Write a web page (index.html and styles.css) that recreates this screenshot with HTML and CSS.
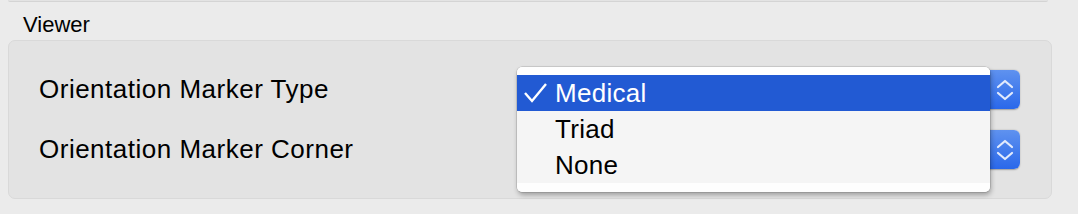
FILE: index.html
```html
<!DOCTYPE html>
<html lang="en">
<head>
    <meta charset="UTF-8">
    <title>Viewer Preferences</title>
    <link rel="stylesheet" href="styles.css">
</head>
<body>
    <div class="prev-box"></div>

    <div class="section-title">Viewer</div>

    <div class="group">
        <div class="row">
            <div class="label">Orientation Marker Type</div>
            <div class="popup">
                <span class="popup-text">Medical</span>
                <span class="stepper">
                    <svg width="18" height="22" viewBox="0 0 18 22">
                        <polyline points="2,8 9,2 16,8" />
                        <polyline points="2,14 9,20 16,14" />
                    </svg>
                </span>
            </div>
        </div>
        <div class="row">
            <div class="label">Orientation Marker Corner</div>
            <div class="popup">
                <span class="popup-text">Upper Right</span>
                <span class="stepper">
                    <svg width="18" height="22" viewBox="0 0 18 22">
                        <polyline points="2,8 9,2 16,8" />
                        <polyline points="2,14 9,20 16,14" />
                    </svg>
                </span>
            </div>
        </div>

        <!-- open popup menu for the first row -->
        <div class="menu">
            <div class="menu-item selected">
                <svg class="check" width="24" height="20" viewBox="0 0 24 20">
                    <polyline points="1,10 8,18 22,1" />
                </svg>
                Medical
            </div>
            <div class="menu-item">Triad</div>
            <div class="menu-item">None</div>
        </div>
    </div>
</body>
</html>
```

FILE: styles.css
```css
body {
    margin: 0;
    background-color: #ebebeb;
    font-family: "Liberation Sans", Arial, sans-serif;
    color: #000;
    height: 214px;
    overflow: hidden;
}
.prev-box {
    height: 1px;
    margin: 0 30px 0 8px;
    background-color: #e3e3e3;
    border-bottom: 1px solid #d4d4d4;
    border-radius: 0 0 6px 6px;
}
.section-title {
    font-size: 22px;
    line-height: 26px;
    margin: 10px 0 2px 23px;
}
.group {
    position: relative;
    margin: 0 26px 0 8px;
    height: 128px;
    background-color: #e3e3e3;
    border: 1px solid #d9d9d9;
    border-radius: 7px;
    padding-top: 29px;
}
.row {
    display: flex;
    align-items: center;
    justify-content: space-between;
    height: 39px;
    margin-bottom: 21px;
    padding: 0 31px 0 30px;
}
.label {
    font-size: 26px;
    letter-spacing: 0.5px;
}
.popup {
    display: flex;
    align-items: center;
    width: 480px;
    height: 39px;
    background-color: #fff;
    border-radius: 6px;
    box-shadow: 0 0.5px 1.5px rgba(0, 0, 0, 0.3);
}
.popup-text {
    flex: 1;
    padding-left: 15px;
    font-size: 26px;
    letter-spacing: 0.3px;
}
.stepper {
    display: flex;
    align-items: center;
    justify-content: center;
    width: 30px;
    height: 39px;
    border-radius: 0 6px 6px 0;
    background: linear-gradient(#5f92ef, #2a68ea);
}
.stepper svg polyline {
    fill: none;
    stroke: #e2eafc;
    stroke-width: 2.2;
    stroke-linecap: round;
    stroke-linejoin: round;
}
.menu {
    position: absolute;
    left: 508px;
    top: 26px;
    width: 473px;
    padding: 8px 0 9px;
    background-color: rgba(255, 255, 255, 0.97);
    border-radius: 5px;
    box-shadow: 0 0 0 0.5px rgba(0, 0, 0, 0.2), 1px 3px 5px rgba(0, 0, 0, 0.3);
}
.menu-item {
    position: relative;
    height: 36px;
    line-height: 36px;
    padding-left: 38px;
    font-size: 26px;
    letter-spacing: 0.3px;
    background-color: rgba(244, 244, 244, 0.95);
}
.menu-item.selected {
    background-color: #225ad3;
    color: #fff;
}
.check {
    position: absolute;
    left: 7px;
    top: 8px;
}
.check polyline {
    fill: none;
    stroke: #fff;
    stroke-width: 2.4;
}
```
